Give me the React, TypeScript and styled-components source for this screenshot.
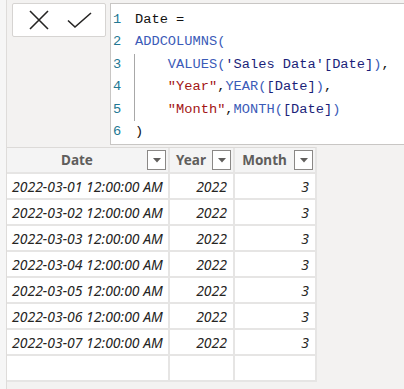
import React from "react";
import styled, { createGlobalStyle } from "styled-components";

const Global = createGlobalStyle`
  html, body { margin: 0; padding: 0; background: #f3f2f1; }
  body { width: 404px; height: 389px; overflow: hidden; }
`;

const Page = styled.div`
  display: flex;
  height: 389px;
`;

const LeftStrip = styled.div`
  width: 6px;
  flex: none;
  background: #f6f6f6;
  border-right: 1px solid #dedcda;
`;

const Main = styled.div`
  flex: 1;
  display: flex;
  flex-direction: column;
  gap: 2px;
  padding-top: 3px;
`;

const TopRow = styled.div`
  display: flex;
  align-items: flex-start;
  gap: 4px;
  padding-left: 5px;
`;

const ActionBox = styled.div`
  width: 94px;
  height: 34px;
  box-sizing: border-box;
  background: #fff;
  border: 1px solid #d6d4d2;
  border-radius: 2px;
  display: flex;
  align-items: center;
  padding: 0 13px 0 16px;
  justify-content: space-between;
  flex: none;
`;

const IconButton = styled.span`
  display: flex;
  align-items: center;
  justify-content: center;
`;

const Editor = styled.div`
  flex: 1;
  height: 142px;
  background: #fff;
  border: 1px solid #c8c6c4;
  border-right: none;
  padding-top: 5px;
  box-sizing: border-box;
  font-family: "Liberation Mono", "DejaVu Sans Mono", monospace;
  font-size: 13.7px;
  color: #111;
`;

const Line = styled.div`
  display: flex;
  height: 22.4px;
  line-height: 22.4px;
  white-space: pre;
`;

const LineNo = styled.span`
  width: 22px;
  padding-left: 2px;
  color: #237893;
  flex: none;
`;

const Code = styled.span<{ $guide?: boolean }>`
  display: block;
  border-left: 1px solid ${(p) => (p.$guide ? "#a8a8a8" : "transparent")};
  margin-left: -1px;
`;

const Fn = styled.span`color: #3b5bb8;`;
const Ref = styled.span`color: #1b1f7a;`;
const Str = styled.span`color: #a31515;`;

const Grid = styled.div`
  display: grid;
  grid-template-columns: 161px 63px 80px;
  grid-auto-rows: 24px;
  gap: 2px;
  background: #e6e5e4;
  border: 2px solid #e6e5e4;
  border-left: none;
  border-top: 1px solid #dcdad8;
  width: fit-content;
  font-family: "Noto Sans", "Open Sans", sans-serif;
`;

const HeadCell = styled.div`
  background: #f4f4f4;
  display: flex;
  align-items: center;
  padding-right: 2px;
  color: #605e5c;
  font-weight: 700;
  font-size: 13.5px;
`;

const HeadLabel = styled.span`
  flex: 1;
  text-align: center;
`;

const Drop = styled.span`
  width: 17px;
  height: 18px;
  border: 1px solid #8a8886;
  background: #fff;
  display: flex;
  align-items: center;
  justify-content: center;
`;

const Cell = styled.div<{ $right?: boolean }>`
  background: #fff;
  font-style: italic;
  font-size: 14px;
  color: #252423;
  display: flex;
  align-items: center;
  justify-content: ${(p) => (p.$right ? "flex-end" : "flex-start")};
  padding: 0 6px 0 5px;
  white-space: nowrap;
  overflow: hidden;
`;

const Tri = () => (
  <svg width="8" height="5" viewBox="0 0 8 5">
    <path d="M0 0 H8 L4 4.5 Z" fill="#605e5c" />
  </svg>
);

const rows = [1, 2, 3, 4, 5, 6, 7].map((d) => `2022-03-0${d} 12:00:00 AM`);

export default function App() {
  return (
    <Page>
      <Global />
      <LeftStrip />
      <Main>
        <TopRow>
          <ActionBox>
            <IconButton>
              <svg width="20" height="20" viewBox="0 0 20 20">
                <path d="M1 1 L19 19 M19 1 L1 19" stroke="#252423" strokeWidth="1.6" fill="none" />
              </svg>
            </IconButton>
            <IconButton>
              <svg width="25" height="17" viewBox="0 0 25 17">
                <path d="M1 8.5 L8 15 L24 1" stroke="#252423" strokeWidth="1.6" fill="none" />
              </svg>
            </IconButton>
          </ActionBox>
          <Editor>
            <Line>
              <LineNo>1</LineNo>
              <Code>Date =</Code>
            </Line>
            <Line>
              <LineNo>2</LineNo>
              <Code>
                <Fn>ADDCOLUMNS(</Fn>
              </Code>
            </Line>
            <Line>
              <LineNo>3</LineNo>
              <Code $guide>
                {"    "}
                <Fn>VALUES(</Fn>
                <Ref>'Sales Data'[Date]</Ref>
                <Fn>)</Fn>,
              </Code>
            </Line>
            <Line>
              <LineNo>4</LineNo>
              <Code $guide>
                {"    "}
                <Str>"Year"</Str>,<Fn>YEAR(</Fn>
                <Ref>[Date]</Ref>
                <Fn>)</Fn>,
              </Code>
            </Line>
            <Line>
              <LineNo>5</LineNo>
              <Code $guide>
                {"    "}
                <Str>"Month"</Str>,<Fn>MONTH(</Fn>
                <Ref>[Date]</Ref>
                <Fn>)</Fn>
              </Code>
            </Line>
            <Line>
              <LineNo>6</LineNo>
              <Code>)</Code>
            </Line>
          </Editor>
        </TopRow>
        <Grid>
          {["Date", "Year", "Month"].map((h) => (
            <HeadCell key={h}>
              <HeadLabel>{h}</HeadLabel>
              <Drop>
                <Tri />
              </Drop>
            </HeadCell>
          ))}
          {rows.map((r) => (
            <React.Fragment key={r}>
              <Cell>{r}</Cell>
              <Cell $right>2022</Cell>
              <Cell $right>3</Cell>
            </React.Fragment>
          ))}
          <Cell />
          <Cell />
          <Cell />
        </Grid>
      </Main>
    </Page>
  );
}
